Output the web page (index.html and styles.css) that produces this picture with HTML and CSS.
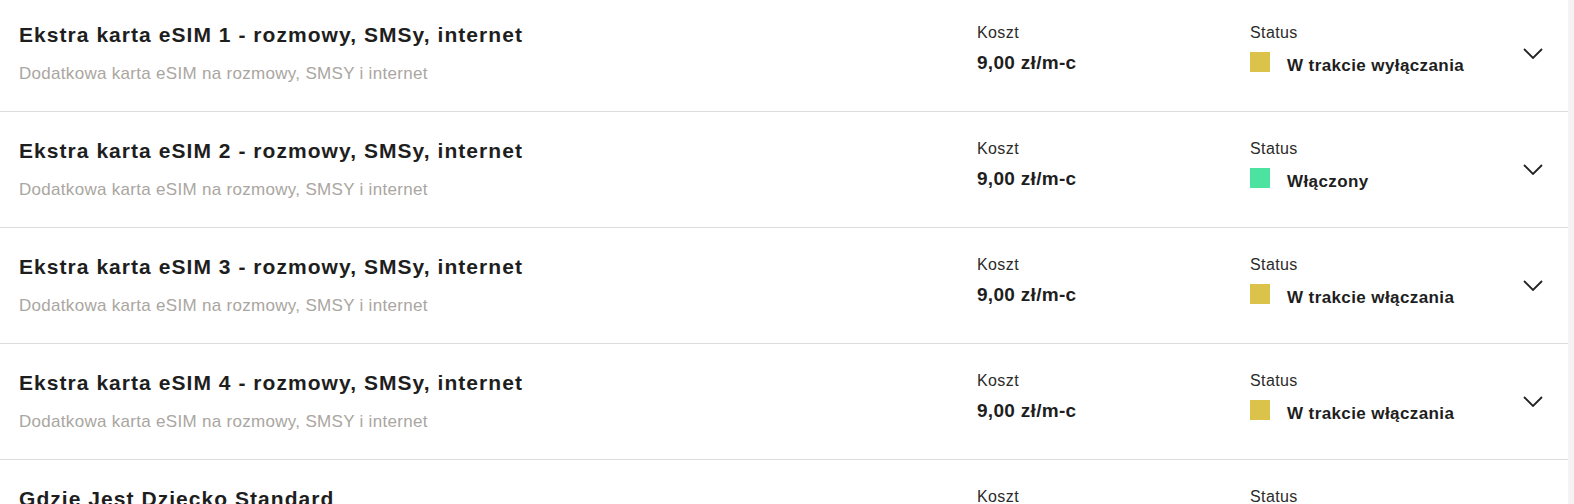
FILE: index.html
```html
<!DOCTYPE html>
<html lang="pl">
<head>
<meta charset="utf-8">
<title>Usługi</title>
<link rel="stylesheet" href="styles.css">
</head>
<body>
<div class="list">
  <div class="row">
    <div class="main">
      <div class="title">Ekstra karta eSIM 1 - rozmowy, SMSy, internet</div>
      <div class="sub">Dodatkowa karta eSIM na rozmowy, SMSY i internet</div>
    </div>
    <div class="cost">
      <div class="label">Koszt</div>
      <div class="price">9,00 zł/m-c</div>
    </div>
    <div class="status">
      <div class="label">Status</div>
      <div class="state"><span class="dot yellow"></span><span class="state-text">W trakcie wyłączania</span></div>
    </div>
    <svg class="chev" width="20" height="11" viewBox="0 0 20 11"><path d="M1 1 L10 10 L19 1" fill="none" stroke="#222" stroke-width="1.8"/></svg>
  </div>
  <div class="row">
    <div class="main">
      <div class="title">Ekstra karta eSIM 2 - rozmowy, SMSy, internet</div>
      <div class="sub">Dodatkowa karta eSIM na rozmowy, SMSY i internet</div>
    </div>
    <div class="cost">
      <div class="label">Koszt</div>
      <div class="price">9,00 zł/m-c</div>
    </div>
    <div class="status">
      <div class="label">Status</div>
      <div class="state"><span class="dot green"></span><span class="state-text">Włączony</span></div>
    </div>
    <svg class="chev" width="20" height="11" viewBox="0 0 20 11"><path d="M1 1 L10 10 L19 1" fill="none" stroke="#222" stroke-width="1.8"/></svg>
  </div>
  <div class="row">
    <div class="main">
      <div class="title">Ekstra karta eSIM 3 - rozmowy, SMSy, internet</div>
      <div class="sub">Dodatkowa karta eSIM na rozmowy, SMSY i internet</div>
    </div>
    <div class="cost">
      <div class="label">Koszt</div>
      <div class="price">9,00 zł/m-c</div>
    </div>
    <div class="status">
      <div class="label">Status</div>
      <div class="state"><span class="dot yellow"></span><span class="state-text">W trakcie włączania</span></div>
    </div>
    <svg class="chev" width="20" height="11" viewBox="0 0 20 11"><path d="M1 1 L10 10 L19 1" fill="none" stroke="#222" stroke-width="1.8"/></svg>
  </div>
  <div class="row">
    <div class="main">
      <div class="title">Ekstra karta eSIM 4 - rozmowy, SMSy, internet</div>
      <div class="sub">Dodatkowa karta eSIM na rozmowy, SMSY i internet</div>
    </div>
    <div class="cost">
      <div class="label">Koszt</div>
      <div class="price">9,00 zł/m-c</div>
    </div>
    <div class="status">
      <div class="label">Status</div>
      <div class="state"><span class="dot yellow"></span><span class="state-text">W trakcie włączania</span></div>
    </div>
    <svg class="chev" width="20" height="11" viewBox="0 0 20 11"><path d="M1 1 L10 10 L19 1" fill="none" stroke="#222" stroke-width="1.8"/></svg>
  </div>
  <div class="row">
    <div class="main">
      <div class="title">Gdzie Jest Dziecko Standard</div>
    </div>
    <div class="cost">
      <div class="label">Koszt</div>
    </div>
    <div class="status">
      <div class="label">Status</div>
    </div>
    <div class="chev-space"></div>
  </div>
</div>
</body>
</html>
```

FILE: styles.css
```css
html, body {
  margin: 0;
  padding: 0;
}
body {
  background: #f3f3f3;
  font-family: "Liberation Sans", Arial, sans-serif;
  color: #1c1c1c;
  height: 504px;
  overflow: hidden;
}
.list {
  width: 1568px;
  background: #fff;
  margin-top: -4px;
}
.row {
  display: flex;
  align-items: flex-start;
  height: 115px;
  border-bottom: 1px solid #dcdcdc;
  padding: 0 25px 0 19px;
}
.main {
  flex: 1;
  padding-top: 26px;
}
.title {
  font-size: 21px;
  line-height: 25px;
  font-weight: bold;
  letter-spacing: 1.05px;
  color: #1e1e1e;
  white-space: nowrap;
}
.sub {
  margin-top: 17px;
  font-size: 17px;
  line-height: 20px;
  letter-spacing: 0.3px;
  color: #aaa6a1;
  white-space: nowrap;
}
.cost {
  width: 273px;
  padding-top: 27px;
}
.status {
  width: 273px;
  padding-top: 27px;
}
.label {
  font-size: 16px;
  line-height: 20px;
  letter-spacing: 0.4px;
  color: #2b2b2b;
}
.price {
  margin-top: 9px;
  font-size: 19px;
  line-height: 22px;
  font-weight: bold;
  letter-spacing: 0.3px;
  color: #1e1e1e;
}
.state {
  display: flex;
  align-items: flex-start;
  margin-top: 9px;
}
.dot {
  width: 20px;
  height: 20px;
  flex: none;
  margin-right: 17px;
}
.dot.yellow { background: #dac24b; }
.dot.green { background: #4be39f; }
.state-text {
  padding-top: 4px;
  font-size: 17px;
  line-height: 20px;
  font-weight: bold;
  letter-spacing: 0.4px;
  color: #1e1e1e;
  white-space: nowrap;
}
.chev {
  margin-top: 52px;
  flex: none;
}
.chev-space {
  width: 20px;
}
```
